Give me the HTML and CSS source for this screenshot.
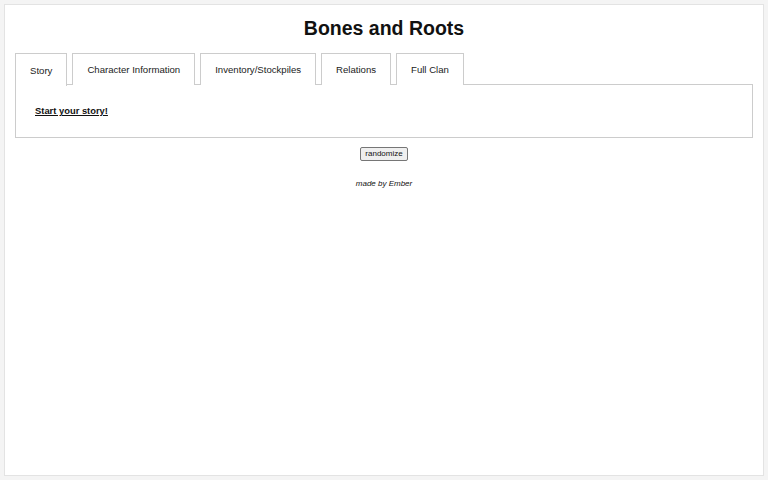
FILE: index.html
```html
<!DOCTYPE html>
<html lang="en">

<head>
          <meta charset="UTF-8">
          <meta name="viewport" content="width=device-width, initial-scale=1.0">
          <title>Bones and Roots</title>
          <link rel="stylesheet" href="styles.css">
</head>

<body>
          <div class="page">
                    <h1 class="title">Bones and Roots</h1>
                    <div class="tabs">
                              <button class="tab active">Story</button>
                              <button class="tab">Character Information</button>
                              <button class="tab">Inventory/Stockpiles</button>
                              <button class="tab">Relations</button>
                              <button class="tab">Full Clan</button>
                    </div>
                    <div class="panel">
                              <p class="story-start">Start your story!</p>
                    </div>
                    <div class="actions">
                              <button class="randomize">randomize</button>
                    </div>
                    <p class="credit">made by Ember</p>
          </div>
</body>

</html>
```

FILE: styles.css
```css
html,
body {
          height: 100%;
}

body {
          margin: 0;
          padding: 4px;
          box-sizing: border-box;
          background-color: #f4f4f4;
          font-family: "Liberation Sans", Arial, sans-serif;
          color: #111;
}

.page {
          height: 100%;
          box-sizing: border-box;
          background-color: #ffffff;
          border: 1px solid #e3e3e3;
          padding: 0 10px;
}

.title {
          margin: 0;
          padding-top: 12px;
          text-align: center;
          font-size: 19.5px;
          line-height: 22px;
          font-weight: bold;
}

.tabs {
          display: flex;
          gap: 5px;
          margin-top: 14px;
          position: relative;
          z-index: 1;
}

.tab {
          font-family: inherit;
          font-size: 9.6px;
          color: #222;
          background-color: #ffffff;
          border: 1px solid #cccccc;
          border-bottom: none;
          padding: 0 14px;
          height: 32px;
          cursor: pointer;
}

.tab.active {
          height: 33px;
          margin-bottom: -1px;
}

.panel {
          border: 1px solid #cccccc;
          margin-top: -1px;
          padding: 20px 19px 19px;
          height: 54px;
          box-sizing: border-box;
}

.story-start {
          margin: 0;
          font-size: 9.4px;
          font-weight: bold;
          text-decoration: underline;
          line-height: 12px;
}

.actions {
          display: flex;
          justify-content: center;
          margin-top: 9px;
}

.randomize {
          font-family: inherit;
          font-size: 8px;
          line-height: 9px;
          padding: 1px 4px 2px;
          border: 1px solid #767676;
          border-radius: 2px;
          background-color: #efefef;
          color: #111;
}

.credit {
          text-align: center;
          font-size: 8px;
          font-style: italic;
          margin: 18px 0 0;
}
```
